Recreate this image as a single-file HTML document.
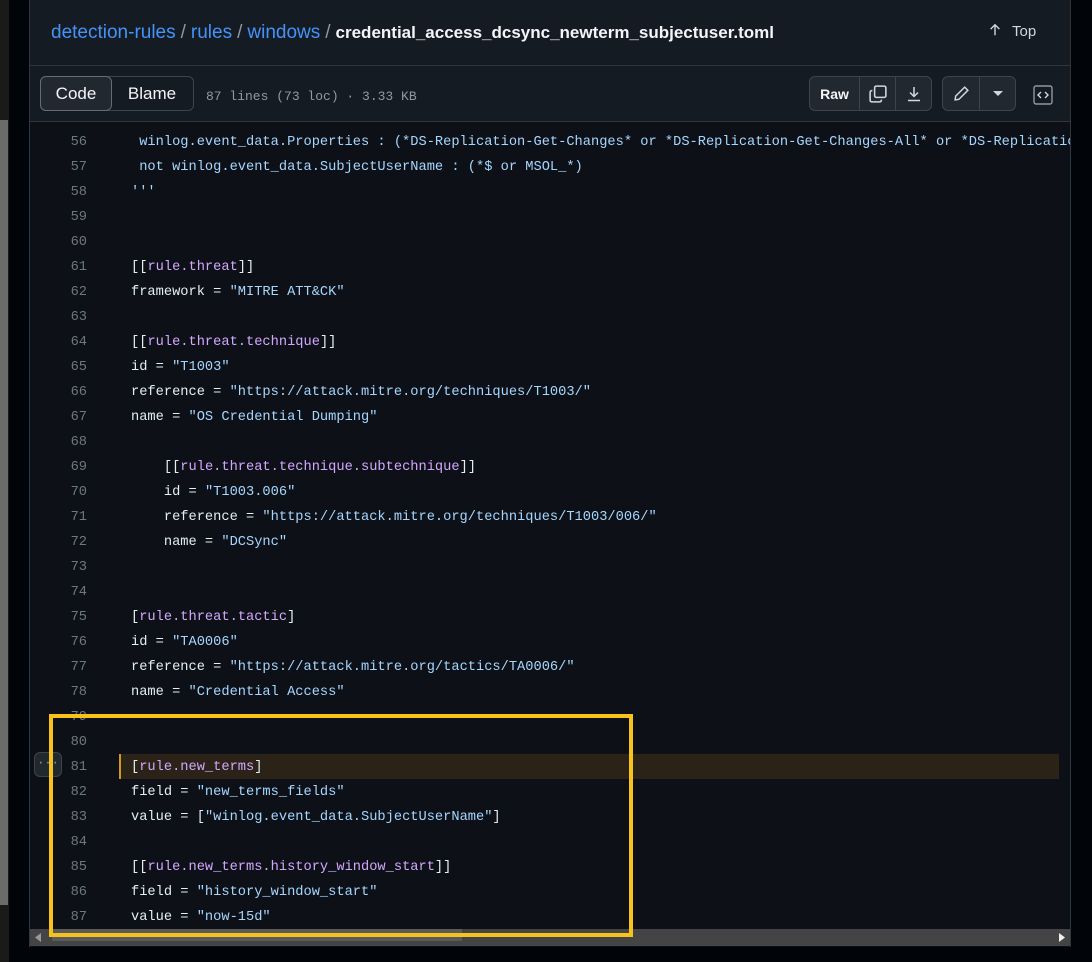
<!DOCTYPE html>
<html><head><meta charset="utf-8"><style>
*{margin:0;padding:0;box-sizing:border-box}
body{width:1092px;height:962px;background:#010409;position:relative;overflow:hidden;font-family:"Liberation Sans",sans-serif}
.lsb{position:absolute;left:0;top:0;width:9px;height:962px;background:#1a1a1a}
.lsb .th{position:absolute;left:0;top:120px;width:8px;height:785px;background:#6b6b6b}
.panel{position:absolute;left:29px;top:0;width:1042px;height:947px;background:#0d1117;border-left:1px solid #30363d;border-right:1px solid #30363d}
.hdr{position:absolute;left:0;top:0;width:100%;height:122px;background:#151b23;}
.hdr .l1{position:absolute;left:0;right:0;top:65px;border-top:1px solid #30363d}
.hdr .l2{position:absolute;left:0;right:0;top:121px;border-top:1px solid #30363d}
.bc{position:absolute;left:21px;top:22px;font-size:19px;color:#4493f8;white-space:nowrap}
.bc .s{color:#9198a1;margin:0 5px}
.bc b{color:#f0f6fc;font-weight:bold;font-size:17px}
.top{position:absolute;left:958px;top:23px;color:#d1d7e0;font-size:15px}
.seg{position:absolute;top:76px;height:35px;border:1px solid #3d444d;border-radius:6px;background:#151b23;display:flex;align-items:center;color:#f0f6fc;font-size:16px}
.meta{position:absolute;left:176px;top:89px;font-family:"Liberation Mono",monospace;font-size:13px;color:#9198a1}
.btn{position:absolute;top:76px;height:35px;border:1px solid #3d444d;border-radius:6px;background:#212830;display:flex}
.btn>div{height:100%;display:flex;align-items:center;justify-content:center;border-right:1px solid #3d444d;color:#f0f6fc;font-size:15px}
.btn>div:last-child{border-right:none}
.code{position:absolute;left:0;top:122px;width:100%;height:807px;overflow:hidden;font-family:"Liberation Mono",monospace;font-size:13.7px;color:#e6edf3}
.row{position:absolute;left:0;height:25px;line-height:27px;white-space:pre;width:100%}
.n{position:absolute;left:0;width:57px;text-align:right;color:#6e7681}
.c{position:absolute;left:101px}
.s2{color:#a5d6ff}.p{color:#d2a8ff}
.hl{position:absolute;left:89px;top:632px;width:940px;height:25px;background:#2b2318;border-left:2px solid #d29922}
.dots{position:absolute;left:4px;top:630px;width:28px;height:25px;border:1px solid #3d444d;border-radius:6px;background:#212830;color:#9198a1;font-size:12px;text-align:center;line-height:20px}
.hsb{position:absolute;left:0;top:929px;width:1040px;height:17px;background:#444}
.hsb .t{position:absolute;left:22px;top:0;width:410px;height:12px;background:#5a5a5a}
.box{position:absolute;left:49px;top:714px;width:584px;height:223px;border:4px solid #f7c31a}
</style></head><body>
<div class="lsb"><div class="th"></div></div>
<div class="panel">
<div class="hdr"><div class="l1"></div><div class="l2"></div>
<div class="bc">detection-rules<span class="s">/</span>rules<span class="s">/</span>windows<span class="s">/</span><b>credential_access_dcsync_newterm_subjectuser.toml</b></div>
<div class="top"><svg width="14" height="14" viewBox="0 0 16 16" style="vertical-align:-1px;margin-right:10px"><path d="M8 14V2M3 7l5-5 5 5" stroke="#d1d7e0" stroke-width="1.6" fill="none"/></svg>Top</div>
<div class="seg" style="left:10px;width:154px"><div style="width:72px;height:35px;margin:-1px;border:1px solid #656c76;border-radius:6px;background:#212830;display:flex;align-items:center;justify-content:center;font-size:17px">Code</div><div style="flex:1;text-align:center;font-size:17px">Blame</div></div>
<div class="meta">87 lines (73 loc) · 3.33 KB</div>
<div class="btn" style="left:779px;width:123px"><div style="width:50px;font-weight:bold;font-size:14px">Raw</div><div style="width:36px"><svg width="18" height="18" viewBox="0 0 16 16"><rect x="5" y="1" width="10" height="10" rx="1.5" fill="none" stroke="#d1d7e0" stroke-width="1.4"/><path d="M3 5H2.5A1.5 1.5 0 0 0 1 6.5v7A1.5 1.5 0 0 0 2.5 15h7a1.5 1.5 0 0 0 1.5-1.5V13" fill="none" stroke="#d1d7e0" stroke-width="1.4"/></svg></div><div style="flex:1"><svg width="16" height="16" viewBox="0 0 16 16"><path d="M8 1v9M4 6.5 8 10.5l4-4M2 14.5h12" stroke="#d1d7e0" stroke-width="1.5" fill="none"/></svg></div></div>
<div class="btn" style="left:912px;width:74px"><div style="width:37px"><svg width="17" height="17" viewBox="0 0 16 16"><path d="M11 2l3 3-8.5 8.5L2 14l.5-3.5z" stroke="#d1d7e0" stroke-width="1.4" fill="none"/></svg></div><div style="flex:1"><svg width="10" height="6"><path d="M0 0h10L5 5z" fill="#d1d7e0"/></svg></div></div>
<div style="position:absolute;left:1003px;top:85px"><svg width="20" height="20" viewBox="0 0 20 20"><rect x="1" y="1" width="18" height="18" rx="2" fill="none" stroke="#9198a1" stroke-width="1.4"/><path d="M8 7 5 10l3 3M12 7l3 3-3 3" stroke="#d1d7e0" stroke-width="1.4" fill="none"/></svg></div>
</div>
<div class="code">
<div class="hl"></div>
<div class="dots">···</div>
<div class="row" style="top:-18px"><span class="n">55</span><span class="c s2">  event.code:"4662" and</span></div>
<div class="row" style="top:7px"><span class="n">56</span><span class="c s2"> winlog.event_data.Properties : (*DS-Replication-Get-Changes* or *DS-Replication-Get-Changes-All* or *DS-Replication-Get-Changes-In-Filtered-Set*)</span></div>
<div class="row" style="top:32px"><span class="n">57</span><span class="c s2"> not winlog.event_data.SubjectUserName : (*$ or MSOL_*)</span></div>
<div class="row" style="top:57px"><span class="n">58</span><span class="c s2">'''</span></div>
<div class="row" style="top:82px"><span class="n">59</span></div>
<div class="row" style="top:107px"><span class="n">60</span></div>
<div class="row" style="top:132px"><span class="n">61</span><span class="c">[[<span class="p">rule.threat</span>]]</span></div>
<div class="row" style="top:157px"><span class="n">62</span><span class="c">framework = <span class="s2">"MITRE ATT&amp;CK"</span></span></div>
<div class="row" style="top:182px"><span class="n">63</span></div>
<div class="row" style="top:207px"><span class="n">64</span><span class="c">[[<span class="p">rule.threat.technique</span>]]</span></div>
<div class="row" style="top:232px"><span class="n">65</span><span class="c">id = <span class="s2">"T1003"</span></span></div>
<div class="row" style="top:257px"><span class="n">66</span><span class="c">reference = <span class="s2">"https://attack.mitre.org/techniques/T1003/"</span></span></div>
<div class="row" style="top:282px"><span class="n">67</span><span class="c">name = <span class="s2">"OS Credential Dumping"</span></span></div>
<div class="row" style="top:307px"><span class="n">68</span></div>
<div class="row" style="top:332px"><span class="n">69</span><span class="c">    [[<span class="p">rule.threat.technique.subtechnique</span>]]</span></div>
<div class="row" style="top:357px"><span class="n">70</span><span class="c">    id = <span class="s2">"T1003.006"</span></span></div>
<div class="row" style="top:382px"><span class="n">71</span><span class="c">    reference = <span class="s2">"https://attack.mitre.org/techniques/T1003/006/"</span></span></div>
<div class="row" style="top:407px"><span class="n">72</span><span class="c">    name = <span class="s2">"DCSync"</span></span></div>
<div class="row" style="top:432px"><span class="n">73</span></div>
<div class="row" style="top:457px"><span class="n">74</span></div>
<div class="row" style="top:482px"><span class="n">75</span><span class="c">[<span class="p">rule.threat.tactic</span>]</span></div>
<div class="row" style="top:507px"><span class="n">76</span><span class="c">id = <span class="s2">"TA0006"</span></span></div>
<div class="row" style="top:532px"><span class="n">77</span><span class="c">reference = <span class="s2">"https://attack.mitre.org/tactics/TA0006/"</span></span></div>
<div class="row" style="top:557px"><span class="n">78</span><span class="c">name = <span class="s2">"Credential Access"</span></span></div>
<div class="row" style="top:582px"><span class="n">79</span></div>
<div class="row" style="top:607px"><span class="n">80</span></div>
<div class="row" style="top:632px"><span class="n">81</span><span class="c">[<span class="p">rule.new_terms</span>]</span></div>
<div class="row" style="top:657px"><span class="n">82</span><span class="c">field = <span class="s2">"new_terms_fields"</span></span></div>
<div class="row" style="top:682px"><span class="n">83</span><span class="c">value = [<span class="s2">"winlog.event_data.SubjectUserName"</span>]</span></div>
<div class="row" style="top:707px"><span class="n">84</span></div>
<div class="row" style="top:732px"><span class="n">85</span><span class="c">[[<span class="p">rule.new_terms.history_window_start</span>]]</span></div>
<div class="row" style="top:757px"><span class="n">86</span><span class="c">field = <span class="s2">"history_window_start"</span></span></div>
<div class="row" style="top:782px"><span class="n">87</span><span class="c">value = <span class="s2">"now-15d"</span></span></div>
</div>
<div class="hsb"><div class="t"></div><svg style="position:absolute;left:5px;top:4px" width="6" height="9"><path d="M6 0v9L0 4.5z" fill="#999"/></svg><svg style="position:absolute;left:1029px;top:4px" width="6" height="9"><path d="M0 0v9l6-4.5z" fill="#eee"/></svg></div>
</div>
<div class="box"></div>
</body></html>
